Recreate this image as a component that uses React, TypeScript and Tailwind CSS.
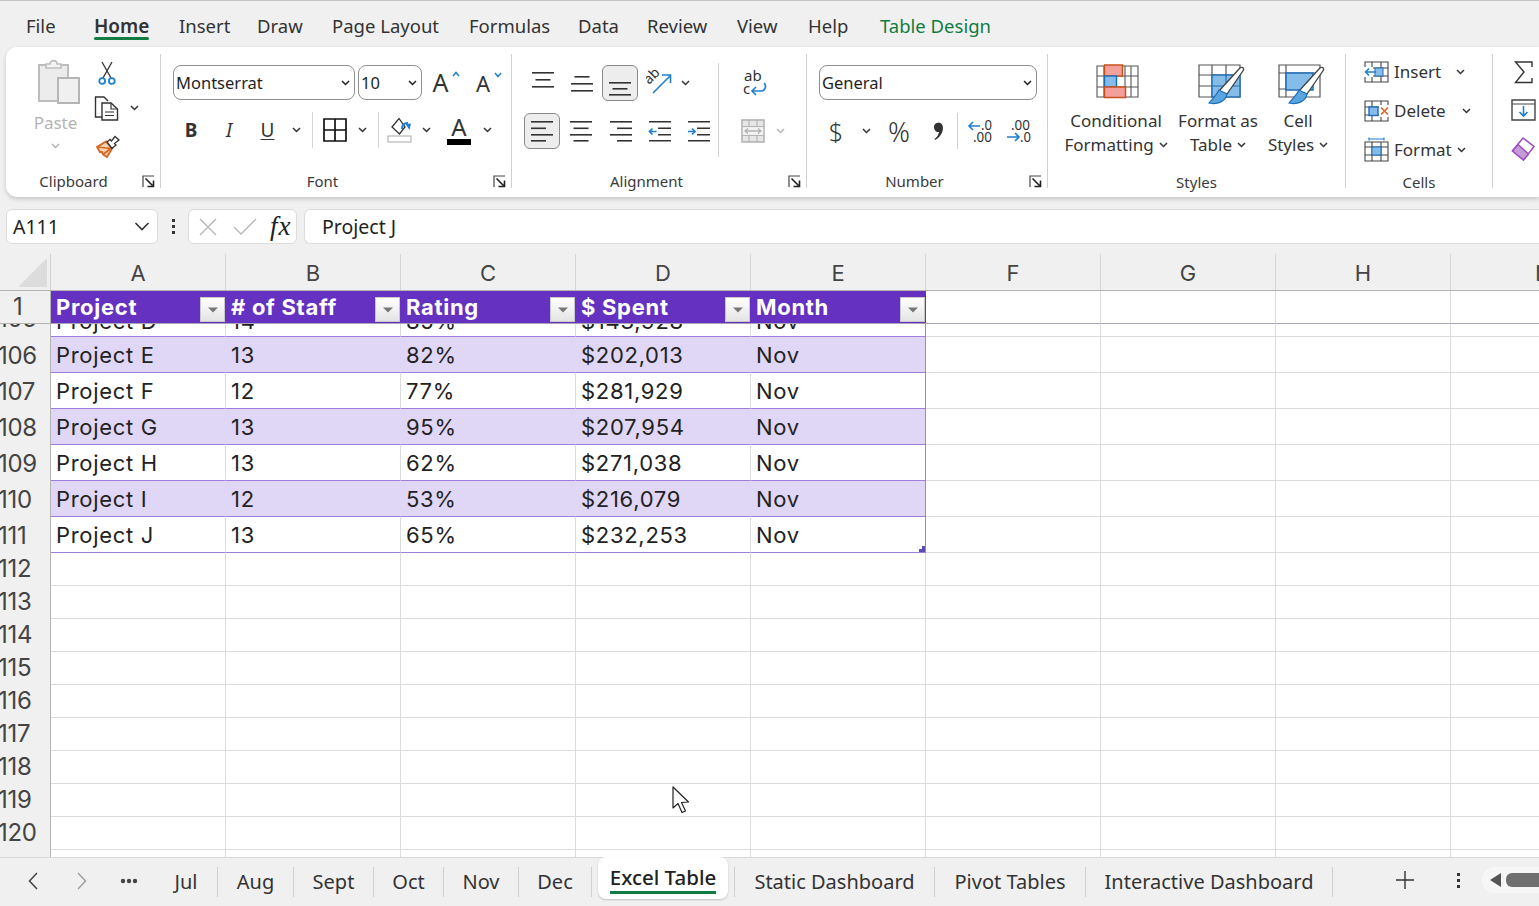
import React from "react";

const SEG = "font-['Noto_Sans',sans-serif]";
const MON = "font-['Inter',sans-serif]";

function Chev({ color = "#333", w = 9 }: { color?: string; w?: number }) {
  return (
    <svg width={w} height={6} viewBox="0 0 9 6" fill="none">
      <path d="M1 1 L4.5 4.5 L8 1" stroke={color} strokeWidth="1.5" />
    </svg>
  );
}

function Launcher() {
  return (
    <svg width="13" height="13" viewBox="0 0 13 13" fill="none" className="absolute right-[5px] top-[4px]">
      <path d="M1 12 V1 H12" stroke="#444" strokeWidth="1.2" />
      <path d="M3.5 3.5 L10.5 10.5 M5.5 11.5 H11.5 V5.5" stroke="#222" strokeWidth="1.6" />
    </svg>
  );
}

function Group({ w, label, launcher, pr = 0, low, children }: { w: string; label?: string; launcher?: boolean; pr?: string | number; low?: boolean; children: React.ReactNode }) {
  return (
    <div className={`${w} shrink-0 h-[134px] border-r border-[#d0d0d0] flex flex-col`}>
      <div className="h-[117px] shrink-0">{children}</div>
      <div className={`relative h-[20px] shrink-0 flex justify-center text-[15px] text-[#3a3a3a] ${low ? "leading-[22px]" : "leading-[20px]"}`}>
        <span style={{ marginRight: pr }}>{label}</span>
        {launcher && <Launcher />}
      </div>
    </div>
  );
}

function Cell({ w, active, children }: { w: string; active?: boolean; children?: React.ReactNode }) {
  return (
    <div className={`${w} h-[36px] shrink-0 flex items-center justify-center ${active ? "bg-[#ededed] border border-[#8a8a8a] rounded-[6px]" : ""}`}>
      {children}
    </div>
  );
}

function Lines({ ys, ws, align = "center" }: { ys: number[]; ws: number[]; align?: "left" | "center" | "right" }) {
  return (
    <svg width="24" height="28" viewBox="0 0 24 28" fill="none">
      {ys.map((y, i) => {
        const x = align === "left" ? 1 : align === "right" ? 23 - ws[i] : 12 - ws[i] / 2;
        return <rect key={i} x={x} y={y} width={ws[i]} height="1.6" fill="#333" />;
      })}
    </svg>
  );
}

function Indent({ dir }: { dir: "in" | "out" }) {
  return (
    <svg width="24" height="24" viewBox="0 0 24 24" fill="none">
      <path d="M1 2.8 H23 M10 9.3 H23 M10 15.8 H23 M1 21.8 H23" stroke="#333" strokeWidth="1.6" />
      {dir === "out" ? (
        <path d="M8.5 12.5 H1.5 M4.5 9.5 L1.5 12.5 L4.5 15.5" stroke="#1f7fd0" strokeWidth="1.7" />
      ) : (
        <path d="M1 12.5 H8 M5 9.5 L8 12.5 L5 15.5" stroke="#1f7fd0" strokeWidth="1.7" />
      )}
    </svg>
  );
}

function Select({ w, text }: { w: string; text: string }) {
  return (
    <div className={`${w} h-[35px] shrink-0 bg-white border border-[#8f8f8f] rounded-[8px] flex items-center justify-between pl-[2px] pr-[4px] text-[#1f1f1f] text-[16.5px]`}>
      <span className="pt-[1px]">{text}</span>
      <Chev color="#222" />
    </div>
  );
}

function Paste() {
  return (
    <svg width="44" height="46" viewBox="0 0 44 46" fill="none">
      <path d="M2 6 H31 V42 H2 Z" fill="#ececec" stroke="#bdbdbd" strokeWidth="2" />
      <path d="M9 9 V5 H13 C13 0.5 20 0.5 20 5 H24 V9 Z" fill="#f4f4f4" stroke="#bdbdbd" strokeWidth="1.6" />
      <path d="M21 19 H42 V44 H21 Z" fill="#f0f0f0" stroke="#b5b5b5" strokeWidth="2" />
    </svg>
  );
}

function Scissors() {
  return (
    <svg width="18" height="25" viewBox="0 0 18 25" fill="none">
      <path d="M4 1 L13 17 M14 1 L5 17" stroke="#333" strokeWidth="1.3" />
      <circle cx="4.2" cy="20" r="2.9" stroke="#1f7fd0" strokeWidth="1.8" />
      <circle cx="13.8" cy="20" r="2.9" stroke="#1f7fd0" strokeWidth="1.8" />
    </svg>
  );
}

function Copy() {
  return (
    <svg width="25" height="25" viewBox="0 0 25 25" fill="none">
      <path d="M9 21 H1.5 V1 H10 L14 5" stroke="#333" strokeWidth="1.4" />
      <path d="M8 7 H17 L23.5 13 V24 H8 Z" fill="#fff" stroke="#333" strokeWidth="1.4" />
      <path d="M17 7 V13 H23.5 M11 16 H20 M11 19.5 H20" stroke="#333" strokeWidth="1.2" />
    </svg>
  );
}

function Brush() {
  return (
    <svg width="24" height="23" viewBox="0 0 24 23" fill="none">
      <path d="M1 12 L10 6.5 L16 13.5 L11 22 L7 19.5 L6 17 L4 17 Z" fill="#f6d5b5" stroke="#d9641e" strokeWidth="1.8" />
      <path d="M1.5 12 L15.5 13.5 M7 19.5 L14 14" stroke="#d9641e" strokeWidth="1.6" />
      <path d="M11 7 L14 4.5 L15.5 6 L19 1.5 L23 5 L18.5 8.5 L20 10 L16 13.5 Z" fill="#fff" stroke="#333" strokeWidth="1.3" />
    </svg>
  );
}

function Borders() {
  return (
    <svg width="24" height="24" viewBox="0 0 24 24" fill="none">
      <path d="M1 1 H23 V23 H1 Z M12 1 V23 M1 12 H23" stroke="#111" strokeWidth="1.7" />
    </svg>
  );
}

function FillColor() {
  return (
    <svg width="25" height="26" viewBox="0 0 25 26" fill="none">
      <path d="M5 10 L12 1.5 L18 10 L12.5 17 Z" fill="#fff" stroke="#333" strokeWidth="1.3" />
      <path d="M15 12 C15 8 17.5 5.5 21 6" stroke="#1f7fd0" strokeWidth="2" />
      <path d="M18.5 7 L24 6.5 L22.5 13 Z" fill="#1f7fd0" />
      <rect x="1" y="19" width="23" height="6" fill="#fff" stroke="#a8a8a8" />
    </svg>
  );
}

function Orientation() {
  return (
    <svg width="26" height="26" viewBox="0 0 26 26" fill="none">
      <text x="0" y="0" fontFamily="Noto Sans" fontSize="14" fill="#333" transform="translate(3 15) rotate(-45)">ab</text>
      <path d="M7 23 L24 6 M16 5 H24.5 V13" stroke="#1f7fd0" strokeWidth="1.6" />
    </svg>
  );
}

function Wrap() {
  return (
    <svg width="24" height="28" viewBox="0 0 24 28" fill="none">
      <text x="1" y="12" fontFamily="Noto Sans" fontSize="15" fill="#333">ab</text>
      <text x="0" y="25" fontFamily="Noto Sans" fontSize="15" fill="#333">c</text>
      <path d="M21 14 C24 17 22 22 18 22 H9 M13 18 L9 22 L13 26" stroke="#1f7fd0" strokeWidth="1.7" />
    </svg>
  );
}

function Merge() {
  return (
    <svg width="24" height="24" viewBox="0 0 24 24" fill="none">
      <rect x="1" y="1" width="22" height="22" fill="#e6e6e6" stroke="#b4b4b4" strokeWidth="1.6" />
      <path d="M1 7.5 H23 M1 16.5 H23 M8 1 V7.5 M16 1 V7.5 M8 16.5 V23 M16 16.5 V23" stroke="#b4b4b4" strokeWidth="1.2" />
      <rect x="1.8" y="8.2" width="20.4" height="7.6" fill="#f2f2f2" />
      <path d="M4 12 H20 M7 9.5 L4 12 L7 14.5 M17 9.5 L20 12 L17 14.5" stroke="#b4b4b4" strokeWidth="1.3" />
    </svg>
  );
}

function Decimal({ kind }: { kind: "dec" | "inc" }) {
  return kind === "inc" ? (
    <svg width="26" height="26" viewBox="0 0 26 26" fill="none">
      <text x="14" y="12" fontFamily="Noto Sans" fontSize="15" textLength="11" lengthAdjust="spacingAndGlyphs" fill="#333">.0</text>
      <text x="6" y="24" fontFamily="Noto Sans" fontSize="15" textLength="19" lengthAdjust="spacingAndGlyphs" fill="#333">.00</text>
      <path d="M13 8 H2 M6 4 L2 8 L6 12" stroke="#1f7fd0" strokeWidth="1.6" />
    </svg>
  ) : (
    <svg width="26" height="26" viewBox="0 0 26 26" fill="none">
      <text x="5" y="12" fontFamily="Noto Sans" fontSize="15" textLength="19" lengthAdjust="spacingAndGlyphs" fill="#333">.00</text>
      <text x="14" y="24" fontFamily="Noto Sans" fontSize="15" textLength="11" lengthAdjust="spacingAndGlyphs" fill="#333">.0</text>
      <path d="M1 19 H13 M9 15 L13 19 L9 23" stroke="#1f7fd0" strokeWidth="1.6" />
    </svg>
  );
}

function CondFmt() {
  return (
    <svg width="43" height="35" viewBox="0 0 43 35" fill="none">
      <path d="M1 2 H42 V33 H1 Z M1 12 H42 M1 23 H42 M8 2 V33 M29 2 V33 M35 2 V33" stroke="#555" strokeWidth="1.1" />
      <rect x="8.5" y="1" width="18" height="11" fill="#f4a09a" stroke="#c8501c" strokeWidth="1.5" />
      <rect x="8.5" y="12" width="12" height="11" fill="#86bce8" stroke="#1f6fb8" strokeWidth="1.5" />
      <rect x="8.5" y="23" width="21" height="10.5" fill="#f4a09a" stroke="#c8501c" strokeWidth="1.5" />
    </svg>
  );
}

function FmtTable() {
  return (
    <svg width="47" height="42" viewBox="0 0 47 42" fill="none">
      <path d="M1 1 H42 V33 H1 Z M1 11 H42 M1 22 H42 M14 1 V33 M28 1 V33" stroke="#555" strokeWidth="1.2" />
      <rect x="14" y="11" width="28" height="22" fill="#86bce8" stroke="#1f6fb8" strokeWidth="1.4" />
      <path d="M14 22 H42 M28 11 V33" stroke="#1f6fb8" strokeWidth="1.2" />
      <path d="M21 27 L41 5 C43 2.5 46 3 45.5 6 L29 30 Z" fill="#fff" stroke="#444" strokeWidth="1.3" />
      <path d="M21 26 C18 32 15 34 11 39 C20 41 28 37 29 30 Z" fill="#5aa4e0" stroke="#1f6fb8" strokeWidth="1.2" />
    </svg>
  );
}

function CellStyles() {
  return (
    <svg width="47" height="42" viewBox="0 0 47 42" fill="none">
      <path d="M1 1 H42 V33 H1 Z M1 9 H42 M8 1 V33 M1 25 H8" stroke="#555" strokeWidth="1.2" />
      <rect x="8" y="9" width="27" height="17" fill="#86bce8" stroke="#1f6fb8" strokeWidth="1.5" />
      <path d="M21 27 L41 5 C43 2.5 46 3 45.5 6 L29 30 Z" fill="#fff" stroke="#444" strokeWidth="1.3" />
      <path d="M21 26 C18 32 15 34 11 39 C20 41 28 37 29 30 Z" fill="#5aa4e0" stroke="#1f6fb8" strokeWidth="1.2" />
    </svg>
  );
}

function InsertIc() {
  return (
    <svg width="25" height="24" viewBox="0 0 25 24" fill="none">
      <path d="M1 2 H24 V22 H1 Z M1 8 H24 M1 16 H24 M8 2 V22 M17 2 V22" stroke="#444" strokeWidth="1.1" />
      <rect x="11" y="8" width="8" height="8" fill="#86bce8" stroke="#1f6fb8" />
      <rect x="0" y="7" width="9" height="10" fill="#fff" />
      <path d="M12 12 H1.5 M5 8.5 L1.5 12 L5 15.5" stroke="#1f7fd0" strokeWidth="1.6" />
    </svg>
  );
}

function DeleteIc() {
  return (
    <svg width="25" height="24" viewBox="0 0 25 24" fill="none">
      <path d="M1 2 H24 V22 H1 Z M1 8 H24 M1 16 H24 M8 2 V22 M17 2 V22" stroke="#444" strokeWidth="1.1" />
      <rect x="5" y="8" width="9" height="8.5" fill="#86bce8" stroke="#1f6fb8" strokeWidth="1.4" />
      <rect x="15" y="6" width="10" height="12" fill="#fff" />
      <path d="M17 8.5 L24 15.5 M24 8.5 L17 15.5" stroke="#d9641e" strokeWidth="1.6" />
    </svg>
  );
}

function FormatIc() {
  return (
    <svg width="25" height="25" viewBox="0 0 25 25" fill="none">
      <path d="M1 5 H24 V24 H1 Z M1 10 H24 M1 18 H24 M8 5 V24 M17 5 V24" stroke="#444" strokeWidth="1.1" />
      <rect x="8" y="10" width="9" height="8" fill="#86bce8" stroke="#1f6fb8" />
      <path d="M5 2 H20 M5 0.5 V3.5 M20 0.5 V3.5" stroke="#1f7fd0" strokeWidth="1.2" />
    </svg>
  );
}

function FillDown() {
  return (
    <svg width="25" height="22" viewBox="0 0 25 22" fill="none">
      <path d="M1 1 H24 V21 H1 Z" stroke="#444" strokeWidth="1.4" />
      <path d="M1 5 H24" stroke="#444" strokeWidth="1.2" />
      <path d="M12.5 7 V17 M8.5 13 L12.5 17 L16.5 13" stroke="#1f7fd0" strokeWidth="1.6" />
    </svg>
  );
}

function Eraser() {
  return (
    <svg width="24" height="24" viewBox="0 0 24 24" fill="none">
      <path d="M12 1 L23 9.5 L12.5 23 L1.5 14 Z" fill="#fff" stroke="#9b4fc0" strokeWidth="1.5" />
      <path d="M7 7.5 L17.5 17 L12.5 23 L1.5 14 Z" fill="#c79ad8" stroke="#9b4fc0" strokeWidth="1.5" />
    </svg>
  );
}

function Big({ w, icon, l1, l2 }: { w: string; icon: React.ReactNode; l1: string; l2: string }) {
  return (
    <div className={`${w} shrink-0 flex flex-col items-center text-[17px] leading-[24px] text-[#333] whitespace-nowrap`}>
      <div className="h-[45px] flex items-start justify-center">{icon}</div>
      <span className="mt-[4px]">{l1}</span>
      <span className="flex items-center gap-[5px]">{l2}<Chev /></span>
    </div>
  );
}

function CellsRow({ icon, label, gap }: { icon: React.ReactNode; label: string; gap: string }) {
  return (
    <div className="h-[39px] flex items-center text-[17px] text-[#333]">
      <div className="w-[30px] shrink-0">{icon}</div>
      <span>{label}</span>
      <span className={gap}><Chev /></span>
    </div>
  );
}

function Ribbon() {
  return (
    <div className="ml-[6px] h-[150px] bg-white rounded-l-[11px] shadow-[0_2px_4px_rgba(0,0,0,0.18)] flex py-[7px] overflow-hidden shrink-0">
      <Group w="w-[155px]" label="Clipboard" launcher pr="19px">
        <div className="flex">
          <div className="w-[76px] pl-[31px] shrink-0 flex flex-col items-start">
            <div className="mt-[5px] h-[47px]"><Paste /></div>
            <div className="w-[42px] flex flex-col items-center text-[17px] text-[#b4b4b4] mt-[5px] leading-[24px]">
              <span className="-ml-[5px]">Paste</span>
              <span className="mt-[8px] -ml-[5px]"><Chev color="#b4b4b4" /></span>
            </div>
          </div>
          <div className="flex flex-col">
            <div className="h-[32px] flex items-end w-[50px] pl-[16px]"><Scissors /></div>
            <div className="h-[38px] flex items-center w-[60px] pl-[12px] pt-[6px] gap-[11px]"><Copy /><Chev /></div>
            <div className="h-[38px] flex items-center w-[50px] pl-[14px] pt-[6px]"><Brush /></div>
          </div>
        </div>
      </Group>

      <Group w="w-[351px]" label="Font" launcher pr="27px">
        <div className="pt-[11px] pl-[12px] flex flex-col gap-[12px]">
          <div className="flex items-center">
            <Select w="w-[182px]" text="Montserrat" />
            <div className="w-[3px]" />
            <Select w="w-[64px]" text="10" />
            <div className="relative w-[43px] ml-[1px] flex justify-center text-[25px] leading-none text-[#333] pr-[8px]">
              A<svg className="absolute right-[6px] top-[1px]" width="8" height="6" viewBox="0 0 8 6" fill="none"><path d="M1 5 L4 1.5 L7 5" stroke="#1f7fd0" strokeWidth="1.5" /></svg>
            </div>
            <div className="relative w-[37px] flex justify-center text-[22px] leading-none text-[#333] pr-[3px]">
              A<svg className="absolute right-[1px] top-[0px]" width="8" height="6" viewBox="0 0 8 6" fill="none"><path d="M1 1 L4 4.5 L7 1" stroke="#1f7fd0" strokeWidth="1.5" /></svg>
            </div>
          </div>
          <div className="flex items-center h-[36px] text-[#333]">
            <Cell w="w-[36px]"><span className="text-[19px] font-bold">B</span></Cell>
            <Cell w="w-[40px]"><span className="text-[19px] italic">I</span></Cell>
            <Cell w="w-[37px]"><span className="text-[19px] underline underline-offset-2">U</span></Cell>
            <Cell w="w-[20px]"><Chev /></Cell>
            <div className="w-[1px] h-[36px] bg-[#d6d6d6] ml-[6px] mr-[10px]" />
            <Borders />
            <Cell w="w-[31px]"><Chev /></Cell>
            <div className="w-[1px] h-[36px] bg-[#d6d6d6] mr-[8px]" />
            <FillColor />
            <Cell w="w-[29px]"><Chev /></Cell>
            <div className="flex flex-col items-center w-[24px] ml-[6px]">
              <span className="text-[24px] leading-[22px] text-[#333]">A</span>
              <div className="w-[24px] h-[6px] bg-black mt-[1px]" />
            </div>
            <Cell w="w-[32px]"><Chev /></Cell>
          </div>
        </div>
      </Group>

      <Group w="w-[295px]" label="Alignment" launcher pr="25px">
        <div className="flex pt-[11px]">
          <div className="pl-[11px] w-[207px] shrink-0 flex flex-col gap-[12px] border-r border-[#d0d0d0] h-[94px] -mt-[2px] pt-[2px]">
            <div className="flex items-center">
              <Cell w="w-[39px]"><Lines ys={[3, 10, 17]} ws={[22, 15, 22]} /></Cell>
              <Cell w="w-[39px]"><Lines ys={[7, 14, 21]} ws={[15, 22, 22]} /></Cell>
              <Cell w="w-[36px] ml-[1px]" active><Lines ys={[13, 19, 25]} ws={[22, 15, 22]} /></Cell>
              <Cell w="w-[42px]"><Orientation /></Cell>
              <Cell w="w-[10px]"><Chev /></Cell>
            </div>
            <div className="flex items-center">
              <Cell w="w-[36px] ml-[1px]" active><Lines ys={[4, 10.5, 17, 23]} ws={[22, 15, 22, 15]} align="left" /></Cell>
              <Cell w="w-[40px] ml-[1px]"><Lines ys={[4, 10.5, 17, 23]} ws={[22, 15, 22, 15]} /></Cell>
              <Cell w="w-[39px]"><Lines ys={[4, 10.5, 17, 23]} ws={[22, 15, 22, 15]} align="right" /></Cell>
              <Cell w="w-[39px]"><Indent dir="out" /></Cell>
              <Cell w="w-[39px]"><Indent dir="in" /></Cell>
            </div>
          </div>
          <div className="pl-[22px] flex flex-col gap-[12px]">
            <div className="h-[36px] flex items-center pl-[2px]"><Wrap /></div>
            <div className="h-[36px] flex items-center gap-[11px]"><Merge /><Chev color="#b8b8b8" /></div>
          </div>
        </div>
      </Group>

      <Group w="w-[241px]" label="Number" launcher pr="25px">
        <div className="pt-[11px] pl-[12px] flex flex-col gap-[12px]">
          <Select w="w-[218px]" text="General" />
          <div className="flex items-center h-[36px] mt-[1px]">
            <Cell w="w-[34px]"><span className="text-[25px] text-[#333] leading-none font-light">$</span></Cell>
            <Cell w="w-[26px]"><Chev /></Cell>
            <Cell w="w-[40px]"><span className="text-[27px] text-[#333] leading-none font-light">%</span></Cell>
            <Cell w="w-[38px]"><svg width="11" height="19" viewBox="0 0 11 19"><path d="M1 5 C1 1 5 0 7.5 1 C11 3 10.5 9 8 12.5 C6.5 15 4.5 17 2 18 L1.5 17 C4 15 5.5 13 6 10 C3 10.5 1 8 1 5 Z" fill="#333" /></svg></Cell>
            <div className="w-[1px] h-[36px] bg-[#d0d0d0] mr-[9px]" />
            <Decimal kind="inc" />
            <div className="w-[13px]" />
            <Decimal kind="dec" />
          </div>
        </div>
      </Group>

      <Group w="w-[298px]" label="Styles" low>
        <div className="flex pl-[16px] pt-[6px]">
          <Big w="w-[104px]" icon={<div className="ml-[2px] mt-[4px]"><CondFmt /></div>} l1="Conditional" l2="Formatting" />
          <Big w="w-[100px]" icon={<div className="ml-[6px] mt-[4px]"><FmtTable /></div>} l1="Format as" l2="Table" />
          <Big w="w-[60px]" icon={<div className="ml-[7px] mt-[4px]"><CellStyles /></div>} l1="Cell" l2="Styles" />
        </div>
      </Group>

      <Group w="w-[147px]" label="Cells" low>
        <div className="pl-[18px] -mt-[2px] flex flex-col">
          <CellsRow icon={<InsertIc />} label="Insert" gap="ml-[15px]" />
          <CellsRow icon={<DeleteIc />} label="Delete" gap="ml-[16px]" />
          <CellsRow icon={<FormatIc />} label="Format" gap="ml-[5px]" />
        </div>
      </Group>

      <div className="pl-[18px] flex flex-col">
        <div className="h-[35px] flex items-center pl-[3px] pt-[2px]">
          <svg width="19" height="23" viewBox="0 0 19 23" fill="none"><path d="M18 6 V1 H1.5 L10 11 L1.5 21.5 H18 V17" stroke="#333" strokeWidth="1.4" /></svg>
        </div>
        <div className="h-[39px] flex items-center pt-[2px]"><FillDown /></div>
        <div className="h-[39px] flex items-center pt-[2px]"><Eraser /></div>
      </div>
    </div>
  );
}

const ribbonTabs: [string, string][] = [
  ["File", "w-[68px]"],
  ["Home", "w-[85px]"],
  ["Insert", "w-[78px]"],
  ["Draw", "w-[75px]"],
  ["Page Layout", "w-[137px]"],
  ["Formulas", "w-[109px]"],
  ["Data", "w-[69px]"],
  ["Review", "w-[90px]"],
  ["View", "w-[71px]"],
  ["Help", "w-[72px]"],
  ["Table Design", "w-[120px]"],
];

function TabsBar() {
  return (
    <div className="h-[47px] shrink-0 pl-[26px] border-t border-[#c4c4c4] flex text-[18.5px] text-[#333]">
      {ribbonTabs.map(([t, w]) => (
        <div key={t} className={`${w} shrink-0 h-[46px] pt-[10px] leading-[30px] whitespace-nowrap`}>
          {t === "Home" ? (
            <span className="inline-flex flex-col font-semibold text-[19px]">
              <span>Home</span>
              <span className="h-[3px] bg-[#107c41] -mt-[4px] rounded-sm" />
            </span>
          ) : t === "Table Design" ? (
            <span className="text-[#107c41]">{t}</span>
          ) : (
            t
          )}
        </div>
      ))}
    </div>
  );
}

function FormulaBar() {
  return (
    <div className="mt-[12px] h-[35px] shrink-0 flex items-stretch pl-[6px]">
      <div className="w-[152px] bg-white border border-[#dcdcdc] rounded-[6px] flex items-center justify-between pl-[6px] pr-[7px] text-[19.5px] text-[#222]">
        <span>A111</span>
        <svg width="16" height="9" viewBox="0 0 16 9" fill="none"><path d="M1.5 1 L8 7.5 L14.5 1" stroke="#333" strokeWidth="1.6" /></svg>
      </div>
      <div className="w-[30px] flex flex-col items-center justify-center gap-[3px]">
        <div className="w-[3px] h-[3px] bg-[#333]" /><div className="w-[3px] h-[3px] bg-[#333]" /><div className="w-[3px] h-[3px] bg-[#333]" />
      </div>
      <div className="w-[109px] bg-white border border-[#dcdcdc] rounded-[6px] flex items-center pl-[10px]">
        <svg width="18" height="18" viewBox="0 0 18 18" fill="none"><path d="M1 1 L17 17 M17 1 L1 17" stroke="#b8b8b8" strokeWidth="1.4" /></svg>
        <svg className="ml-[16px]" width="24" height="18" viewBox="0 0 24 18" fill="none"><path d="M1 9 L8 16 L23 1" stroke="#b8b8b8" strokeWidth="1.4" /></svg>
        <span className="ml-[13px] font-['Liberation_Serif',serif] italic text-[27px] text-[#222] leading-none tracking-[1px]">fx</span>
      </div>
      <div className="flex-1 ml-[7px] bg-white border border-[#dcdcdc] border-r-0 rounded-l-[6px] flex items-center pl-[17px] text-[19.5px] text-[#222]">
        Project J
      </div>
    </div>
  );
}

const cols = ["A", "B", "C", "D", "E", "F", "G", "H", "I"];
const headers = ["Project", "# of Staff", "Rating", "$ Spent", "Month"];
const data: [string, string[]][] = [
  ["106", ["Project E", "13", "82%", "$202,013", "Nov"]],
  ["107", ["Project F", "12", "77%", "$281,929", "Nov"]],
  ["108", ["Project G", "13", "95%", "$207,954", "Nov"]],
  ["109", ["Project H", "13", "62%", "$271,038", "Nov"]],
  ["110", ["Project I", "12", "53%", "$216,079", "Nov"]],
  ["111", ["Project J", "13", "65%", "$232,253", "Nov"]],
];
const emptyRows = ["112", "113", "114", "115", "116", "117", "118", "119", "120"];
const blankCols = [0, 1, 2, 3];

function RowHead({ n, h, align = "items-center", pad = "" }: { n: string; h: string; align?: string; pad?: string }) {
  return (
    <div className={`${h} ${pad} w-[51px] shrink-0 bg-[#f0f0f0] border-r border-[#b4b4b4] flex ${align} justify-start overflow-hidden text-[24px] text-[#444] tracking-[-0.3px]`}>
      <span className="-ml-[2px] whitespace-nowrap">{n}</span>
    </div>
  );
}

function FilterBtn() {
  return (
    <div className="absolute right-[1px] bottom-[1px] w-[25px] h-[25px] bg-gradient-to-b from-white to-[#e4e4e4] border border-[#c8c8c8] flex items-center justify-center">
      <svg width="10" height="6" viewBox="0 0 10 6"><path d="M0 0.5 H10 L5 5.5 Z" fill="#777" /></svg>
    </div>
  );
}

function BlankCells({ h, border = "border-[#dcdcdc]" }: { h: string; border?: string }) {
  return (
    <>
      {blankCols.map((i) => (
        <div key={i} className={`${h} w-[175px] shrink-0 border-r border-b border-r-[#dcdcdc] ${border}`} />
      ))}
    </>
  );
}

function Sheet() {
  return (
    <div className={`flex-1 min-h-0 mt-[10px] overflow-hidden flex flex-col bg-white ${MON}`}>
      <div className="flex h-[37px] shrink-0 bg-[#f0f0f0] border-b border-[#b4b4b4]">
        <div className="w-[51px] shrink-0 border-r border-[#d0d0d0] pl-[18px] pt-[4px]">
          <svg width="30" height="30" viewBox="0 0 30 30"><path d="M29 0 V29 H0 Z" fill="#dcdcdc" /></svg>
        </div>
        {cols.map((c) => (
          <div key={c} className="w-[175px] shrink-0 border-r border-[#d6d6d6] flex items-center justify-center text-[22px] text-[#444] pt-[2px]">{c}</div>
        ))}
      </div>

      <div className="flex h-[33px] shrink-0">
        <div className="w-[51px] h-[33px] shrink-0 bg-[#f0f0f0] border-r border-b border-[#b4b4b4] flex items-center justify-center text-[24px] text-[#444]">
          <span className="-ml-[14px]">1</span>
        </div>
        {headers.map((t) => (
          <div key={t} className="relative w-[175px] h-[33px] shrink-0 bg-[#6531c1] border-b border-[#a8a4b8] pl-[5px] pt-[1px] flex items-center text-white font-bold text-[22px] tracking-[0.7px]">
            {t}
            <FilterBtn />
          </div>
        ))}
        <BlankCells h="h-[33px]" border="border-b-[#a8a4b8]" />
      </div>

      <div className="flex h-[13px] shrink-0">
        <RowHead n="105" h="h-[13px]" align="items-end" />
        {["Project D", "14", "85%", "$143,928", "Nov"].map((t, i) => (
          <div key={t} className={`w-[175px] h-[13px] shrink-0 border-r border-b border-b-[#9d80de] overflow-hidden flex items-end pl-[5px] text-[22px] text-[#222] leading-[30px] tracking-[0.7px] ${i === 4 ? "border-r-[#9d80de]" : "border-r-[#dcdcdc]"}`}>{t}</div>
        ))}
        <BlankCells h="h-[13px]" />
      </div>

      {data.map(([n, row], idx) => (
        <div key={n} className="flex h-[36px] shrink-0">
          <RowHead n={n} h="h-[36px]" pad="pt-[1px]" />
          {row.map((t, i) => (
            <div
              key={i}
              className={`w-[175px] h-[36px] shrink-0 border-b border-b-[#9d80de] pl-[5px] pt-[1px] flex items-center text-[22px] text-[#222] tracking-[0.7px] ${idx % 2 === 0 ? "bg-[#e0d6f5]" : "bg-white"} ${i === 4 ? "border-r border-r-[#9d80de] relative" : idx % 2 === 0 ? "border-r border-r-transparent" : "border-r border-r-[#dcdcdc]"}`}
            >
              {t}
              {n === "111" && i === 4 && <div className="absolute right-0 bottom-0 w-[6px] h-[6px] bg-[#5a4bb5] [clip-path:polygon(100%_0,100%_100%,0_100%,0_50%,50%_50%,50%_0)]" />}
            </div>
          ))}
          <BlankCells h="h-[36px]" />
        </div>
      ))}

      {emptyRows.map((n) => (
        <div key={n} className="flex h-[33px] shrink-0">
          <RowHead n={n} h="h-[33px]" pad="pb-[1px]" />
          {cols.map((c) => (
            <div key={c} className="w-[175px] h-[33px] shrink-0 border-r border-b border-[#dcdcdc]" />
          ))}
        </div>
      ))}
      <div className="flex flex-1 min-h-0">
        <div className="w-[51px] shrink-0 bg-[#f0f0f0] border-r border-[#b4b4b4]" />
        {cols.map((c) => (
          <div key={c} className="w-[175px] shrink-0 border-r border-[#dcdcdc]" />
        ))}
      </div>
    </div>
  );
}

function Sep() {
  return <div className="w-[1px] h-[30px] bg-[#d0d0d0] shrink-0" />;
}

const leftTabs: [string, string][] = [
  ["Jul", "w-[62px]"],
  ["Aug", "w-[75px]"],
  ["Sept", "w-[79px]"],
  ["Oct", "w-[69px]"],
  ["Nov", "w-[74px]"],
  ["Dec", "w-[72px]"],
];

function SheetTabs() {
  return (
    <div className={`h-[49px] shrink-0 bg-[#f0f0f0] border-t border-[#d8d8d8] flex items-start text-[20px] text-[#333] ${SEG}`}>
      <div className="w-[155px] h-[48px] shrink-0 flex items-center pb-[3px] pl-[28px]">
        <svg width="10" height="18" viewBox="0 0 10 18" fill="none"><path d="M9 1 L1.5 9 L9 17" stroke="#444" strokeWidth="1.5" /></svg>
        <svg className="ml-[39px]" width="10" height="18" viewBox="0 0 10 18" fill="none"><path d="M1 1 L8.5 9 L1 17" stroke="#a0a0a0" strokeWidth="1.5" /></svg>
        <svg className="ml-[33px]" width="18" height="6" viewBox="0 0 18 6"><circle cx="3" cy="3" r="2.2" fill="#444" /><circle cx="9" cy="3" r="2.2" fill="#444" /><circle cx="15" cy="3" r="2.2" fill="#444" /></svg>
      </div>
      <div className="flex items-center h-[48px]">
        {leftTabs.map(([t, w]) => (
          <React.Fragment key={t}>
            <div className={`${w} shrink-0 text-center`}>{t}</div>
            <Sep />
          </React.Fragment>
        ))}
      </div>
      <div className="w-[130px] h-[42px] shrink-0 -mt-[1px] ml-[6px] bg-white rounded-[8px] shadow-[0_1px_2px_rgba(0,0,0,0.2)] flex flex-col items-center pt-[6px] font-medium text-[20.5px] leading-[28px] text-[#222]">
        <span>Excel Table</span>
        <span className="w-[106px] h-[3px] bg-[#107c41]" />
      </div>
      <div className="flex items-center h-[48px] ml-[6px]">
        <Sep />
        <div className="w-[199px] shrink-0 text-center">Static Dashboard</div>
        <Sep />
        <div className="w-[150px] shrink-0 text-center">Pivot Tables</div>
        <Sep />
        <div className="w-[246px] shrink-0 text-center">Interactive Dashboard</div>
        <Sep />
      </div>
      <div className="h-[48px] flex items-center pb-[4px]">
        <svg className="ml-[63px]" width="18" height="18" viewBox="0 0 18 18" fill="none"><path d="M9 0 V18 M0 9 H18" stroke="#333" strokeWidth="1.4" /></svg>
        <div className="ml-[43px] flex flex-col gap-[3px]"><div className="w-[3px] h-[3px] bg-[#333]" /><div className="w-[3px] h-[3px] bg-[#333]" /><div className="w-[3px] h-[3px] bg-[#333]" /></div>
        <div className="ml-[22px] h-[26px] w-[70px] bg-[#f6f6f6] rounded-l-[12px] flex items-center pl-[8px] shrink-0">
          <svg width="11" height="14" viewBox="0 0 11 14"><path d="M11 0 V14 L0 7 Z" fill="#555" /></svg>
          <div className="ml-[5px] w-[40px] h-[14px] bg-[#6f6f6f] rounded-l-[6px] shrink-0" />
        </div>
      </div>
    </div>
  );
}

export default function App() {
  return (
    <div className={`relative w-[1539px] h-[906px] overflow-hidden bg-[#f0f0f0] flex flex-col ${SEG}`}>
      <TabsBar />
      <Ribbon />
      <FormulaBar />
      <Sheet />
      <SheetTabs />
      <svg className="absolute left-[672px] top-[786px]" width="19" height="28" viewBox="0 0 19 28" fill="none">
        <path d="M1 1 V22 L6 17.5 L10 26.5 L13.5 25 L9.5 16.5 L16.5 16 Z" fill="#fff" stroke="#222" strokeWidth="1.2" strokeLinejoin="round" />
      </svg>
    </div>
  );
}
